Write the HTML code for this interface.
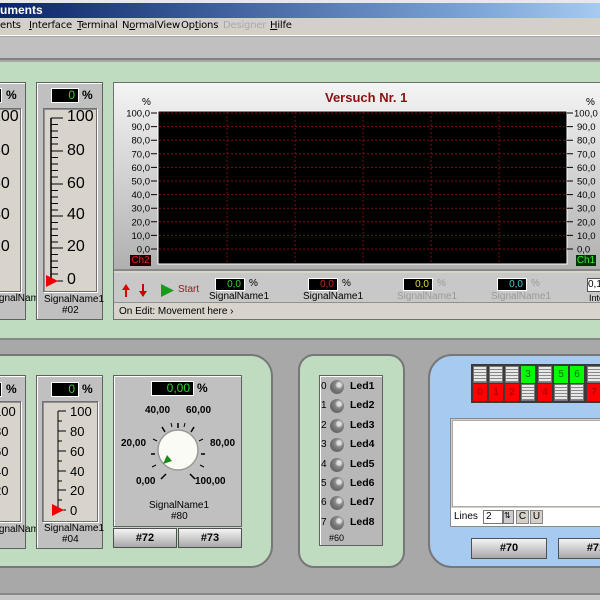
<!DOCTYPE html>
<html><head><meta charset="utf-8"><style>
*{margin:0;padding:0;box-sizing:border-box}
body{width:600px;height:600px;overflow:hidden;position:relative;background:#a8a8a8;font-family:"Liberation Sans",sans-serif;font-size:11px;color:#000}
.a{position:absolute}
.t{position:absolute;white-space:nowrap}
.m{position:absolute;white-space:nowrap;top:20px;font-family:"DejaVu Sans",sans-serif;font-size:10px;letter-spacing:-0.2px}
.disp{position:absolute;background:#000;border:1px solid #fff;color:#2fd32f;text-align:right;font-size:12px;line-height:13px;padding-right:3px}
.pan{position:absolute;background:#c0c0c0;border:1px solid #606060;box-shadow:inset 1px 1px 0 #fff}
.scale{position:absolute;background:#d8d4cc;border:1px solid #707070;box-shadow:inset 1px 1px 0 #909090,1px 1px 0 #fff}
.btn{position:absolute;background:linear-gradient(#f4f4f4,#a8a8a8);border:1px solid #505050;font-weight:bold;text-align:center;font-size:11px}
.sw{position:absolute;width:14px;height:17px}
.g{background:#e0e0e0;background-image:repeating-linear-gradient(#e8e8e8 0 2px,#888 2px 3px);border:1px solid #777}
.r{background:#f00;color:#900;text-align:center;font-size:10px;line-height:17px}
.gr{background:#0f0;color:#060;text-align:center;font-size:10px;line-height:17px}
.led{position:absolute;width:14px;height:14px;border-radius:50%;background:radial-gradient(circle at 65% 35%,#ddd 0 2px,#888 4px,#6a6a6a 8px)}
.ln{position:absolute;left:321px;font-size:10px}
.lt{position:absolute;left:350px;font-size:10.5px;font-weight:bold}
</style></head><body>
<div class="a" style="left:0;top:0;width:600px;height:3px;background:#e8e8e8"></div>
<div class="a" style="left:0;top:3px;width:600px;height:15px;background:linear-gradient(90deg,#0a246a,#7ea6d8 80%,#a6caf0)"></div>
<div class="t" style="left:0;top:3px;color:#fff;font-weight:bold;font-size:12px;line-height:14px">uments</div>
<div class="a" style="left:0;top:18px;width:600px;height:18px;background:#d4d0c8;border-bottom:1px solid #fff"></div>
<div class="m" style="left:0">ents</div>
<div class="m" style="left:29px"><u>I</u>nterface</div>
<div class="m" style="left:77px"><u>T</u>erminal</div>
<div class="m" style="left:122px">N<u>o</u>rmalView</div>
<div class="m" style="left:181px">Op<u>t</u>ions</div>
<div class="m" style="left:223px;color:#a8a8a8">Designer</div>
<div class="m" style="left:270px"><u>H</u>ilfe</div>
<div class="a" style="left:0;top:37px;width:600px;height:23px;background:#c0c0c0;border-bottom:2px solid #808080"></div>
<div class="a" style="left:0;top:62px;width:600px;height:278px;background:#c0dcc0;border-bottom:2px solid #888"></div>

<div class="pan" style="left:-41px;top:82px;width:67px;height:238px"></div>
<div class="disp" style="left:-25px;top:88px;width:27px;height:15px"></div>
<div class="t" style="left:6px;top:88px;font-size:12px;font-weight:bold">%</div>
<div class="scale" style="left:-33px;top:108px;width:54px;height:184px"></div>
<div class="t" style="left:-8px;top:108px;font-size:16px">100</div>
<div class="t" style="left:-8px;top:142px;font-size:16px">80</div>
<div class="t" style="left:-8px;top:175px;font-size:16px">60</div>
<div class="t" style="left:-8px;top:206px;font-size:16px">40</div>
<div class="t" style="left:-8px;top:238px;font-size:16px">20</div>
<div class="t" style="left:-10px;top:293px;font-size:10px">SignalName1</div>

<div class="pan" style="left:36px;top:82px;width:67px;height:238px"></div>
<div class="disp" style="left:51px;top:88px;width:28px;height:15px">0</div>
<div class="t" style="left:82px;top:88px;font-size:12px;font-weight:bold">%</div>
<div class="scale" style="left:43px;top:108px;width:54px;height:184px"></div>
<svg class="a" style="left:43px;top:108px" width="54" height="184">
<line x1="8" y1="10" x2="8" y2="173" stroke="#000" stroke-width="1.5"/>
<g stroke="#000">
<line x1="8" y1="10" x2="20" y2="10"/><line x1="8" y1="43" x2="20" y2="43"/><line x1="8" y1="76" x2="20" y2="76"/><line x1="8" y1="108" x2="20" y2="108"/><line x1="8" y1="140" x2="20" y2="140"/><line x1="8" y1="173" x2="20" y2="173"/>
<path d="M8 16.5h7M8 23h7M8 29.5h7M8 36h7M8 49.5h7M8 56h7M8 62.5h7M8 69h7M8 82.5h7M8 89h7M8 95.5h7M8 102h7M8 114.5h7M8 121h7M8 127.5h7M8 134h7M8 146.5h7M8 153h7M8 159.5h7M8 166h7"/></g>
<polygon points="3,167 3,179 15,173" fill="#e00"/></svg>
<div class="t" style="left:67px;top:108px;font-size:16px">100</div>
<div class="t" style="left:67px;top:142px;font-size:16px">80</div>
<div class="t" style="left:67px;top:175px;font-size:16px">60</div>
<div class="t" style="left:67px;top:206px;font-size:16px">40</div>
<div class="t" style="left:67px;top:238px;font-size:16px">20</div>
<div class="t" style="left:67px;top:271px;font-size:16px">0</div>
<div class="t" style="left:44px;top:294px;font-size:10px">SignalName1</div>
<div class="t" style="left:62px;top:305px;font-size:10px">#02</div>

<div class="a" style="left:113px;top:82px;width:490px;height:238px;border:1px solid #707070;background:#d8d4cc"></div>
<div class="a" style="left:114px;top:83px;width:488px;height:188px;background:linear-gradient(#f4f4f4,#b0b0b0);border-bottom:2px solid #888"></div>
<div class="t" style="left:325px;top:90px;font-size:13px;font-weight:bold;color:#8b1010">Versuch Nr. 1</div>
<div class="t" style="left:142px;top:97px;font-size:10px">%</div>
<div class="t" style="left:586px;top:97px;font-size:10px">%</div>
<svg class="a" style="left:120px;top:105px" width="480" height="165">
<rect x="38" y="6" width="409" height="153" fill="#000" stroke="#fff"/>
<g stroke="#7a1010" stroke-dasharray="2,2">
<path d="M39 8H446M39 21.6H446M39 35.2H446M39 48.8H446M39 62.4H446M39 76H446M39 89.6H446M39 103.2H446M39 116.8H446M39 130.4H446M39 144H446"/>
<path d="M107 7V158M175 7V158M243 7V158M311 7V158M379 7V158"/></g>
<g stroke="#000"><path d="M31 8h6M31 21.6h6M31 35.2h6M31 48.8h6M31 62.4h6M31 76h6M31 89.6h6M31 103.2h6M31 116.8h6M31 130.4h6M31 144h6"/>
<path d="M447 8h6M447 21.6h6M447 35.2h6M447 48.8h6M447 62.4h6M447 76h6M447 89.6h6M447 103.2h6M447 116.8h6M447 130.4h6M447 144h6"/></g>
<g font-family="Liberation Sans" font-size="9.5" text-anchor="end">
<text x="30" y="11.5">100,0</text><text x="30" y="25">90,0</text><text x="30" y="38.7">80,0</text><text x="30" y="52.3">70,0</text><text x="30" y="65.9">60,0</text><text x="30" y="79.5">50,0</text><text x="30" y="93.1">40,0</text><text x="30" y="106.7">30,0</text><text x="30" y="120.3">20,0</text><text x="30" y="133.9">10,0</text><text x="30" y="147.5">0,0</text></g>
<g font-family="Liberation Sans" font-size="9.5">
<text x="454" y="11.5">100,0</text><text x="457" y="25">90,0</text><text x="457" y="38.7">80,0</text><text x="457" y="52.3">70,0</text><text x="457" y="65.9">60,0</text><text x="457" y="79.5">50,0</text><text x="457" y="93.1">40,0</text><text x="457" y="106.7">30,0</text><text x="457" y="120.3">20,0</text><text x="457" y="133.9">10,0</text><text x="457" y="147.5">0,0</text></g>
</svg>
<div class="t" style="left:130px;top:255px;width:21px;height:11px;background:#200;color:#d22;font-size:10px;line-height:11px;text-align:center">Ch2</div>
<div class="t" style="left:576px;top:255px;width:20px;height:11px;background:#030;color:#3e3;font-size:10px;line-height:11px;text-align:center">Ch1</div>
<div class="a" style="left:114px;top:273px;width:488px;height:30px;background:#c8c8c8;border-bottom:1px solid #909090"></div>
<svg class="a" style="left:120px;top:283px" width="60" height="16"><polygon points="6,1 2,7 5,7 5,14 7,14 7,7 10,7" fill="#d00"/><polygon points="23,14 19,8 22,8 22,1 24,1 24,8 27,8" fill="#c00"/><polygon points="41,1 41,14 54,7.5" fill="#1a9a1a"/></svg>
<div class="t" style="left:178px;top:284px;color:#8b2020;font-size:10px">Start</div>
<div class="disp" style="left:215px;top:278px;width:30px;height:13px;font-size:10px;line-height:11px">0,0</div><div class="t" style="left:249px;top:278px;font-size:10px">%</div><div class="t" style="left:209px;top:291px;font-size:10px">SignalName1</div>
<div class="disp" style="left:308px;top:278px;width:30px;height:13px;font-size:10px;line-height:11px;color:#c22">0,0</div><div class="t" style="left:342px;top:278px;font-size:10px">%</div><div class="t" style="left:303px;top:291px;font-size:10px">SignalName1</div>
<div class="disp" style="left:403px;top:278px;width:30px;height:13px;font-size:10px;line-height:11px;color:#dd3">0,0</div><div class="t" style="left:437px;top:278px;font-size:10px;color:#999">%</div><div class="t" style="left:397px;top:291px;font-size:10px;color:#999">SignalName1</div>
<div class="disp" style="left:497px;top:278px;width:30px;height:13px;font-size:10px;line-height:11px;color:#4cc">0,0</div><div class="t" style="left:531px;top:278px;font-size:10px;color:#999">%</div><div class="t" style="left:491px;top:291px;font-size:10px;color:#999">SignalName1</div>
<div class="t" style="left:587px;top:278px;width:20px;height:14px;background:#fff;border:1px solid #555;font-size:10px">0,1</div>
<div class="t" style="left:589px;top:293px;font-size:9px">Inte</div>
<div class="t" style="left:119px;top:306px;font-size:10px">On Edit: Movement here ›</div>

<div class="a" style="left:-30px;top:354px;width:303px;height:214px;background:#c0dcc0;border:2px solid #777;border-radius:22px"></div>
<div class="a" style="left:298px;top:354px;width:107px;height:214px;background:#c0dcc0;border:2px solid #777;border-radius:16px"></div>
<div class="a" style="left:428px;top:354px;width:200px;height:214px;background:#a6caf0;border:2px solid #777;border-radius:24px"></div>
<div class="a" style="left:0;top:593px;width:600px;height:7px;background:#c8c8c8;border-top:2px solid #888"></div>

<div class="pan" style="left:-41px;top:375px;width:67px;height:174px"></div>
<div class="disp" style="left:-25px;top:382px;width:27px;height:15px"></div>
<div class="t" style="left:6px;top:382px;font-size:12px;font-weight:bold">%</div>
<div class="scale" style="left:-35px;top:401px;width:56px;height:121px"></div>
<div class="t" style="left:-6px;top:404px;font-size:13px">100</div>
<div class="t" style="left:-6px;top:424px;font-size:13px">80</div>
<div class="t" style="left:-6px;top:444px;font-size:13px">60</div>
<div class="t" style="left:-6px;top:464px;font-size:13px">40</div>
<div class="t" style="left:-6px;top:483px;font-size:13px">20</div>
<div class="t" style="left:-10px;top:524px;font-size:10px">SignalName1</div>

<div class="pan" style="left:36px;top:375px;width:67px;height:174px"></div>
<div class="disp" style="left:51px;top:382px;width:28px;height:15px">0</div>
<div class="t" style="left:82px;top:382px;font-size:12px;font-weight:bold">%</div>
<div class="scale" style="left:42px;top:401px;width:56px;height:121px"></div>
<svg class="a" style="left:42px;top:401px" width="56" height="121">
<line x1="16" y1="10" x2="16" y2="109" stroke="#000"/>
<path d="M16 10h8M16 30h8M16 50h8M16 70h8M16 89h8M16 109h8" stroke="#000"/>
<path d="M16 20h4M16 40h4M16 60h4M16 80h4M16 99h4" stroke="#000"/>
<polygon points="10,103 10,115 22,109" fill="#e00"/></svg>
<div class="t" style="left:70px;top:404px;font-size:13px">100</div>
<div class="t" style="left:70px;top:424px;font-size:13px">80</div>
<div class="t" style="left:70px;top:444px;font-size:13px">60</div>
<div class="t" style="left:70px;top:464px;font-size:13px">40</div>
<div class="t" style="left:70px;top:483px;font-size:13px">20</div>
<div class="t" style="left:70px;top:503px;font-size:13px">0</div>
<div class="t" style="left:44px;top:523px;font-size:10px">SignalName1</div>
<div class="t" style="left:62px;top:534px;font-size:10px">#04</div>

<div class="pan" style="left:113px;top:375px;width:129px;height:152px"></div>
<div class="disp" style="left:151px;top:381px;width:43px;height:15px">0,00</div>
<div class="t" style="left:197px;top:381px;font-size:12px;font-weight:bold">%</div>
<svg class="a" style="left:113px;top:375px" width="129" height="152">
<circle cx="65" cy="75" r="20" fill="#fbfbf5" stroke="#999" stroke-width="1.5"/>
<g stroke="#000" stroke-width="1.5">
<path d="M53 99l-5 5M77 99l5 5M42 79h-4M88 79h4M52 57l-3-5M78 57l3-5M65 53v-5"/>
<path d="M43 90l-4 2M87 90l4 2M44 66l-4-2M86 66l4-2M59 52l-1-4M71 52l1-4" stroke-width="1"/></g>
<polygon points="50,89 59,86 54,80" fill="#1a8a1a"/></svg>
<div class="t" style="left:145px;top:405px;font-size:10px;font-weight:bold">40,00</div>
<div class="t" style="left:186px;top:405px;font-size:10px;font-weight:bold">60,00</div>
<div class="t" style="left:121px;top:438px;font-size:10px;font-weight:bold">20,00</div>
<div class="t" style="left:210px;top:438px;font-size:10px;font-weight:bold">80,00</div>
<div class="t" style="left:136px;top:476px;font-size:10px;font-weight:bold">0,00</div>
<div class="t" style="left:195px;top:476px;font-size:10px;font-weight:bold">100,00</div>
<div class="t" style="left:149px;top:500px;font-size:10px">SignalName1</div>
<div class="t" style="left:171px;top:511px;font-size:10px">#80</div>
<div class="btn" style="left:113px;top:528px;width:64px;height:20px;line-height:18px">#72</div>
<div class="btn" style="left:178px;top:528px;width:64px;height:20px;line-height:18px">#73</div>

<div class="pan" style="left:319px;top:375px;width:64px;height:171px;background:#b8b8b8"></div>
<div class="ln" style="top:381px">0</div><div class="ln" style="top:400px">1</div><div class="ln" style="top:420px">2</div><div class="ln" style="top:439px">3</div><div class="ln" style="top:459px">4</div><div class="ln" style="top:478px">5</div><div class="ln" style="top:497px">6</div><div class="ln" style="top:517px">7</div>
<div class="led" style="left:330px;top:380px"></div><div class="led" style="left:330px;top:399px"></div><div class="led" style="left:330px;top:419px"></div><div class="led" style="left:330px;top:438px"></div><div class="led" style="left:330px;top:458px"></div><div class="led" style="left:330px;top:477px"></div><div class="led" style="left:330px;top:496px"></div><div class="led" style="left:330px;top:516px"></div>
<div class="lt" style="top:380px">Led1</div><div class="lt" style="top:399px">Led2</div><div class="lt" style="top:419px">Led3</div><div class="lt" style="top:438px">Led4</div><div class="lt" style="top:458px">Led5</div><div class="lt" style="top:477px">Led6</div><div class="lt" style="top:496px">Led7</div><div class="lt" style="top:516px">Led8</div>
<div class="t" style="left:329px;top:533px;font-size:9px">#60</div>

<div class="a" style="left:471px;top:364px;width:135px;height:39px;background:#3a3a3a"></div>
<div class="sw g" style="left:473px;top:366px"></div><div class="sw r" style="left:473px;top:384px">0</div>
<div class="sw g" style="left:489px;top:366px"></div><div class="sw r" style="left:489px;top:384px">1</div>
<div class="sw g" style="left:505px;top:366px"></div><div class="sw r" style="left:505px;top:384px">2</div>
<div class="sw gr" style="left:521px;top:366px">3</div><div class="sw g" style="left:521px;top:384px"></div>
<div class="sw g" style="left:538px;top:366px"></div><div class="sw r" style="left:538px;top:384px">4</div>
<div class="sw gr" style="left:554px;top:366px">5</div><div class="sw g" style="left:554px;top:384px"></div>
<div class="sw gr" style="left:570px;top:366px">6</div><div class="sw g" style="left:570px;top:384px"></div>
<div class="sw g" style="left:587px;top:366px"></div><div class="sw r" style="left:587px;top:384px">7</div>

<div class="a" style="left:450px;top:418px;width:155px;height:109px;background:#d4d0c8;border:1px solid #888"></div>
<div class="a" style="left:452px;top:420px;width:152px;height:87px;background:#fff;border:1px solid #aaa"></div>
<div class="a" style="left:451px;top:508px;width:154px;height:18px;background:#fff"></div>
<div class="t" style="left:454px;top:511px;font-size:10px">Lines</div>
<div class="a" style="left:483px;top:510px;width:20px;height:14px;background:#fff;border:1px solid #777;font-size:10px;padding-left:2px">2</div>
<div class="a" style="left:503px;top:510px;width:11px;height:14px;background:#ccc;border:1px solid #777;font-size:8px">⇅</div>
<div class="a" style="left:516px;top:510px;width:13px;height:14px;background:#d4d0c8;border:1px solid #888;font-size:10px;text-align:center">C</div>
<div class="a" style="left:530px;top:510px;width:13px;height:14px;background:#d4d0c8;border:1px solid #888;font-size:10px;text-align:center">U</div>
<div class="btn" style="left:471px;top:538px;width:76px;height:21px;line-height:19px">#70</div>
<div class="btn" style="left:558px;top:538px;width:76px;height:21px;line-height:19px">#71</div>
</body></html>
